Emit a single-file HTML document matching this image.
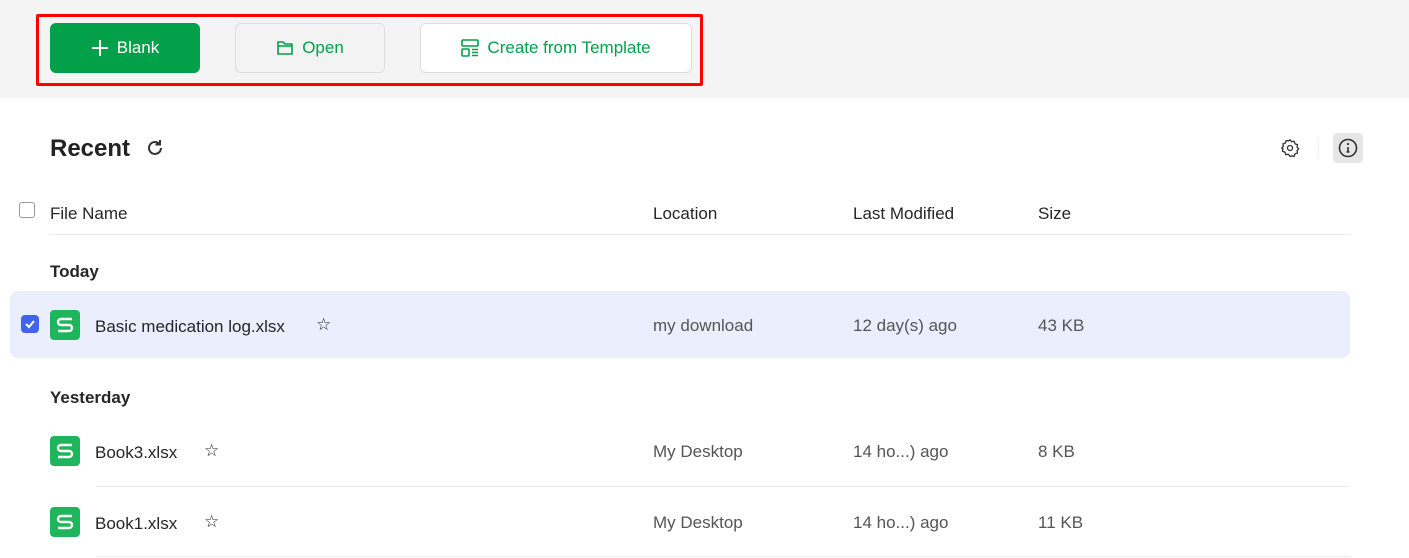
<!DOCTYPE html>
<html><head><meta charset="utf-8"><style>
body{margin:0;width:1409px;height:558px;background:#fff;font-family:"Liberation Sans",sans-serif;position:relative;overflow:hidden;color:#262626}
.a{position:absolute}
.hdr{left:0;top:0;width:1409px;height:98px;background:#f4f4f4}
.btn{position:absolute;top:23px;height:50px;box-sizing:border-box;border-radius:6px;display:flex;align-items:center;justify-content:center;font-size:17px;gap:8px}
.t{position:absolute;font-size:17px;line-height:20px;transform:translateY(-9px)}
.g{color:#555}
.icon{position:absolute;width:30px;height:30px;border-radius:4px;background:#1fb55a;display:flex;align-items:center;justify-content:center}
.line{position:absolute;height:1px;background:#ebebeb}
</style></head><body>
<div class="a hdr"></div>
<div class="a" style="left:36px;top:14px;width:667px;height:72px;box-sizing:border-box;border:3px solid #f00;border-radius:2px"></div>
<div class="btn" style="left:50px;width:150px;background:#03a04a;color:#fff"><svg width="18" height="18" viewBox="0 0 18 18"><path d="M9 1v16M1 9h16" stroke="#fff" stroke-width="2"/></svg>Blank</div>
<div class="btn" style="left:235px;width:150px;background:#f3f3f3;border:1px solid #ddd;color:#03a04a"><svg width="18" height="16" viewBox="0 0 18 16"><path d="M2 2h5l2 2h7v10H2z M2 6h14" stroke="#03a04a" stroke-width="1.6" fill="none" stroke-linejoin="round"/></svg>Open</div>
<div class="btn" style="left:420px;width:272px;background:#fff;border:1px solid #ddd;color:#03a04a"><svg width="18" height="18" viewBox="0 0 18 18"><rect x="1" y="1" width="16" height="6" rx="1" stroke="#03a04a" stroke-width="1.6" fill="none"/><rect x="1" y="10" width="7" height="7" rx="1" stroke="#03a04a" stroke-width="1.6" fill="none"/><path d="M11 10.5h6M11 13.5h6M11 16.5h6" stroke="#03a04a" stroke-width="1.6"/></svg>Create from Template</div>

<div class="t" style="left:50px;top:149px;font-size:24px;font-weight:bold;line-height:28px;transform:translateY(-14px);color:#222">Recent</div>
<svg class="a" style="left:145px;top:138px" width="20" height="20" viewBox="0 0 20 20"><path d="M16 10a6 6 0 1 1-2-4.5" stroke="#333" stroke-width="2" fill="none"/><path d="M15 2v4.5h-4.5" stroke="#333" stroke-width="2" fill="none"/></svg>
<svg class="a" style="left:1280px;top:138px" width="20" height="20" viewBox="0 0 24 24"><path d="M12 2l2 2.5 3-.5 1 3 3 1-.5 3 2 2-2 2 .5 3-3 1-1 3-3-.5L12 22l-2-2.5-3 .5-1-3-3-1 .5-3L2 12l2-2-.5-3 3-1 1-3 3 .5z" stroke="#333" stroke-width="1.6" fill="none" stroke-linejoin="round"/><circle cx="12" cy="12" r="3" stroke="#333" stroke-width="1.6" fill="none"/></svg>
<div class="a" style="left:1318px;top:137px;width:1px;height:22px;background:#eee"></div>
<div class="a" style="left:1333px;top:133px;width:30px;height:30px;border-radius:4px;background:#e6e6e6"></div>
<svg class="a" style="left:1338px;top:138px" width="20" height="20" viewBox="0 0 20 20"><circle cx="10" cy="10" r="8.5" stroke="#333" stroke-width="1.6" fill="none"/><path d="M10 9v5M8.5 14h3" stroke="#333" stroke-width="1.6"/><circle cx="10" cy="6" r="1.1" fill="#333"/></svg>

<div class="a" style="left:19px;top:202px;width:16px;height:16px;border:1.5px solid #999;border-radius:3px;box-sizing:border-box"></div>
<div class="t" style="left:50px;top:213px">File Name</div>
<div class="t" style="left:653px;top:213px">Location</div>
<div class="t" style="left:853px;top:213px">Last Modified</div>
<div class="t" style="left:1038px;top:213px">Size</div>
<div class="line" style="left:50px;top:234px;width:1300px"></div>
<div class="t" style="left:50px;top:271px;font-weight:bold">Today</div>

<div class="a" style="left:10px;top:291px;width:1340px;height:67px;background:#ebeefd;border-radius:8px"></div>
<div class="a" style="left:21px;top:315px;width:18px;height:18px;background:#4263eb;border-radius:4px"></div>
<svg class="a" style="left:21px;top:315px" width="18" height="18" viewBox="0 0 18 18"><path d="M5 9l3 3 5-6" stroke="#fff" stroke-width="2" fill="none"/></svg>

<div class="t" style="left:50px;top:397px;font-weight:bold">Yesterday</div>

<div class="icon" style="left:50px;top:310px"><svg width="20" height="20" viewBox="0 0 20 20"><path d="M17 4H6a3 3 0 0 0 0 6h8a3 3 0 0 1 0 6H3" stroke="#fff" stroke-width="2.4" fill="none"/></svg></div>
<div class="t" style="left:95px;top:326px">Basic medication log.xlsx</div>
<div class="t" style="left:316px;top:324px">☆</div>
<div class="t g" style="left:653px;top:325px">my download</div>
<div class="t g" style="left:853px;top:325px">12 day(s) ago</div>
<div class="t g" style="left:1038px;top:325px">43 KB</div>

<div class="icon" style="left:50px;top:436px"><svg width="20" height="20" viewBox="0 0 20 20"><path d="M17 4H6a3 3 0 0 0 0 6h8a3 3 0 0 1 0 6H3" stroke="#fff" stroke-width="2.4" fill="none"/></svg></div>
<div class="t" style="left:95px;top:452px">Book3.xlsx</div>
<div class="t" style="left:204px;top:450px">☆</div>
<div class="t g" style="left:653px;top:451px">My Desktop</div>
<div class="t g" style="left:853px;top:451px">14 ho...) ago</div>
<div class="t g" style="left:1038px;top:451px">8 KB</div>
<div class="line" style="left:96px;top:486px;width:1254px"></div>

<div class="icon" style="left:50px;top:507px"><svg width="20" height="20" viewBox="0 0 20 20"><path d="M17 4H6a3 3 0 0 0 0 6h8a3 3 0 0 1 0 6H3" stroke="#fff" stroke-width="2.4" fill="none"/></svg></div>
<div class="t" style="left:95px;top:523px">Book1.xlsx</div>
<div class="t" style="left:204px;top:521px">☆</div>
<div class="t g" style="left:653px;top:522px">My Desktop</div>
<div class="t g" style="left:853px;top:522px">14 ho...) ago</div>
<div class="t g" style="left:1038px;top:522px">11 KB</div>
<div class="line" style="left:96px;top:556px;width:1254px"></div>
</body></html>
